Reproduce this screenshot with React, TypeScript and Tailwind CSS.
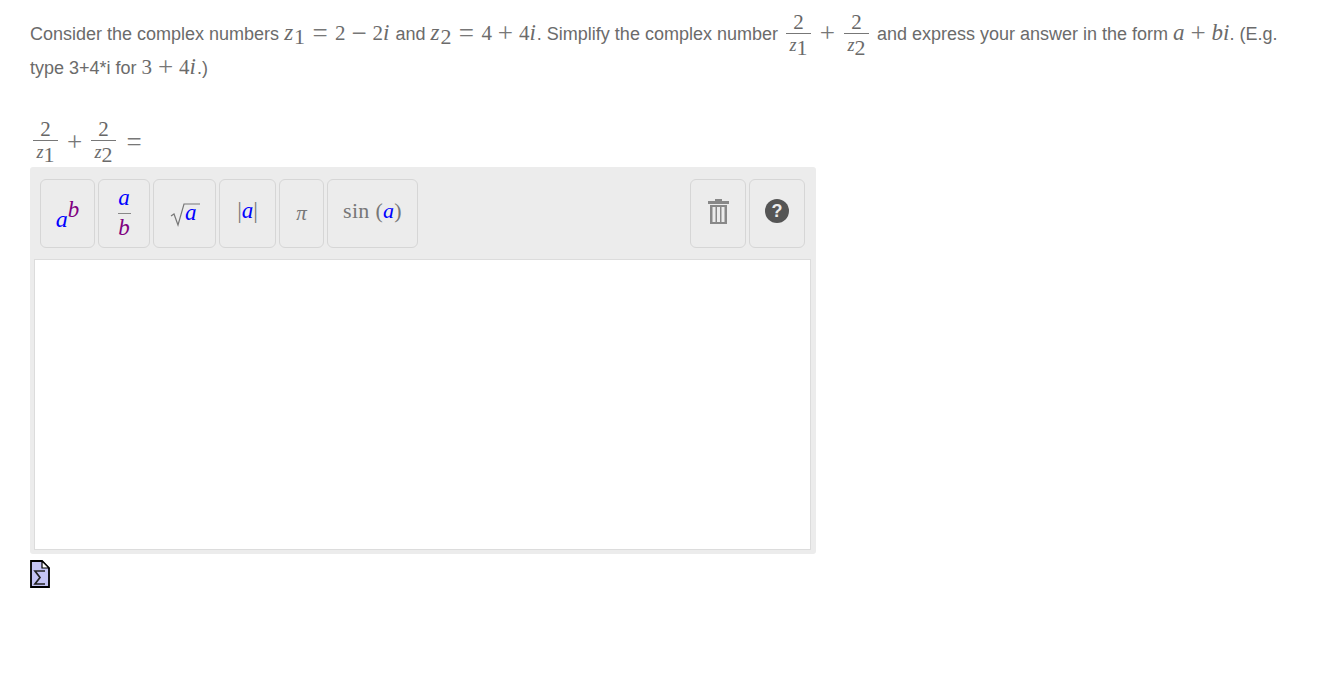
const mathFont = "font-['Liberation_Serif',serif]";

function V({ children }: { children: React.ReactNode }) {
  return <i className={`${mathFont} text-[23px] leading-none`}>{children}</i>;
}

function I() {
  return <i className={`${mathFont} pr-[1px] text-[23px] leading-none`}>i</i>;
}

function N({ children }: { children: React.ReactNode }) {
  return <span className={`${mathFont} text-[21px] leading-none`}>{children}</span>;
}

// wide operators, the serif "=" and "+" are narrower than the math font in the picture
function Op({ children, rel }: { children: React.ReactNode; rel?: boolean }) {
  return (
    <span className={`${mathFont} ${rel ? 'mx-[7px]' : 'mx-[5.5px]'} inline-block w-[16px] text-center align-[-2px] text-[27px] leading-none text-[#777]`}>
      {children}
    </span>
  );
}

function Z({ n }: { n: string }) {
  return (
    <span className={`${mathFont} leading-none`}>
      <i className="pr-[1px] text-[23px]">z</i>
      <span className="align-[-4px] text-[22px]">{n}</span>
    </span>
  );
}

function Frac({ n }: { n: string }) {
  return (
    <span className={`${mathFont} mx-[3px] -my-[12px] inline-flex h-[46px] flex-col items-center align-middle leading-none`}>
      <span className="h-[21px] text-[21px] leading-[20px] text-[#666]">2</span>
      <span className="h-px w-[25px] bg-[#777]"></span>
      <span className="h-[24px] leading-[23px]">
        <i className="align-[4px] text-[18px]">z</i>
        <span className="text-[22px]">{n}</span>
      </span>
    </span>
  );
}

function ToolButton({ className, children }: { className: string; children: React.ReactNode }) {
  return (
    <button className={`${className} flex h-[69px] items-center justify-center rounded-[6px] border border-[#d6d6d6] bg-[#ececec]`}>
      {children}
    </button>
  );
}

export default function App() {
  return (
    <div className="min-h-[682px] bg-white pl-[30px] pr-[40px] pt-[17px] font-['Liberation_Sans',sans-serif] text-[18px] leading-[34px] text-[#6b6b6b]">
      <p className="h-[34px] whitespace-nowrap">
        Consider the complex numbers <Z n="1" /><Op rel>=</Op><N>2</N><Op>−</Op><N>2</N><I /> and <Z n="2" /><Op rel>=</Op><N>4</N><Op>+</Op><N>4</N><I />. Simplify the complex number{' '}
        <Frac n="1" /><Op>+</Op><Frac n="2" /> and express your answer in the form <V>a</V><Op>+</Op><V>bi</V>. (E.g.
      </p>
      <p>
        type 3+4*i for <N>3</N><Op>+</Op><N>4</N><I />.)
      </p>

      <div className="mt-[34px] flex h-[46px] items-center">
        <Frac n="1" />
        <Op>+</Op>
        <Frac n="2" />
        <Op rel>=</Op>
      </div>

      <div className="mt-[2px] h-[387px] w-[786px] rounded-[3px] bg-[#ececec] px-[4px] pb-[4px] pt-[12px]">
        <div className="flex gap-[3px] pl-[6px] pr-[7px]">
          <ToolButton className="w-[55px]">
            <span className={`${mathFont} pt-[2px] text-[24px] italic text-[#0000ff]`}>
              a<span className="align-[10px] text-[23px] text-[#800080]">b</span>
            </span>
          </ToolButton>
          <ToolButton className="w-[52px]">
            <span className={`${mathFont} flex flex-col items-center pb-[2px] text-[23px] italic leading-none`}>
              <span className="h-[25px] leading-[19px] text-[#0000ff]">a</span>
              <span className="h-px w-[13px] bg-[#888]"></span>
              <span className="h-[24px] pt-[2px] text-[#800080]">b</span>
            </span>
          </ToolButton>
          <ToolButton className="w-[63px]">
            <svg width="30" height="26" viewBox="0 0 30 26">
              <path d="M1 15 L4 13 L8 24 L14 3 L30 3" fill="none" stroke="#777" strokeWidth="1.2" />
              <text x="15" y="19" fontFamily="Liberation Serif" fontStyle="italic" fontSize="23" fill="#0000ff">a</text>
            </svg>
          </ToolButton>
          <ToolButton className="w-[57px]">
            <span className={`${mathFont} pb-[6px] text-[23px] text-[#777]`}>
              |<i className="text-[#0000ff]">a</i>|
            </span>
          </ToolButton>
          <ToolButton className="w-[45px]">
            <i className={`${mathFont} pb-[2px] text-[21px] text-[#777]`}>π</i>
          </ToolButton>
          <ToolButton className="w-[91px]">
            <span className={`${mathFont} pb-[6px] text-[22px] tracking-[0.3px] text-[#777]`}>
              sin (<i className="text-[#0000ff]">a</i>)
            </span>
          </ToolButton>
          <ToolButton className="ml-auto w-[56px]">
            <svg width="21" height="25" viewBox="0 0 21 25" className="mb-[4px]">
              <path d="M7 0 h7 v2 h-7z" fill="#888" />
              <path d="M0 2 h21 v3 h-21z" fill="#888" />
              <path d="M2 6 h17 v19 h-17z" fill="#888" />
              <path d="M4.5 8 h3 v15 h-3z M9 8 h3 v15 h-3z M13.5 8 h3 v15 h-3z" fill="#ececec" />
            </svg>
          </ToolButton>
          <ToolButton className="w-[56px]">
            <span className="mb-[6px] flex h-[24px] w-[24px] items-center justify-center rounded-full bg-[#555] font-['Liberation_Sans',sans-serif] text-[18px] font-bold leading-none text-[#ececec]">
              ?
            </span>
          </ToolButton>
        </div>
        <div className="mt-[11px] h-[291px] w-[777px] border border-[#dcdcdc] bg-white"></div>
      </div>

      <div className="mt-[6px]">
        <svg width="20" height="28" viewBox="0 0 20 28" className="block">
          <path d="M1 1 H12 L19 8 V27 H1 Z" fill="#c4c4f4" stroke="#000" strokeWidth="1.8" />
          <path d="M12 1 V8 H19 Z" fill="#fff" stroke="#000" strokeWidth="1.2" />
          <path d="M15 11 H5 L10 17.5 L5 24 H15" fill="none" stroke="#222" strokeWidth="1.7" />
        </svg>
      </div>
    </div>
  );
}
